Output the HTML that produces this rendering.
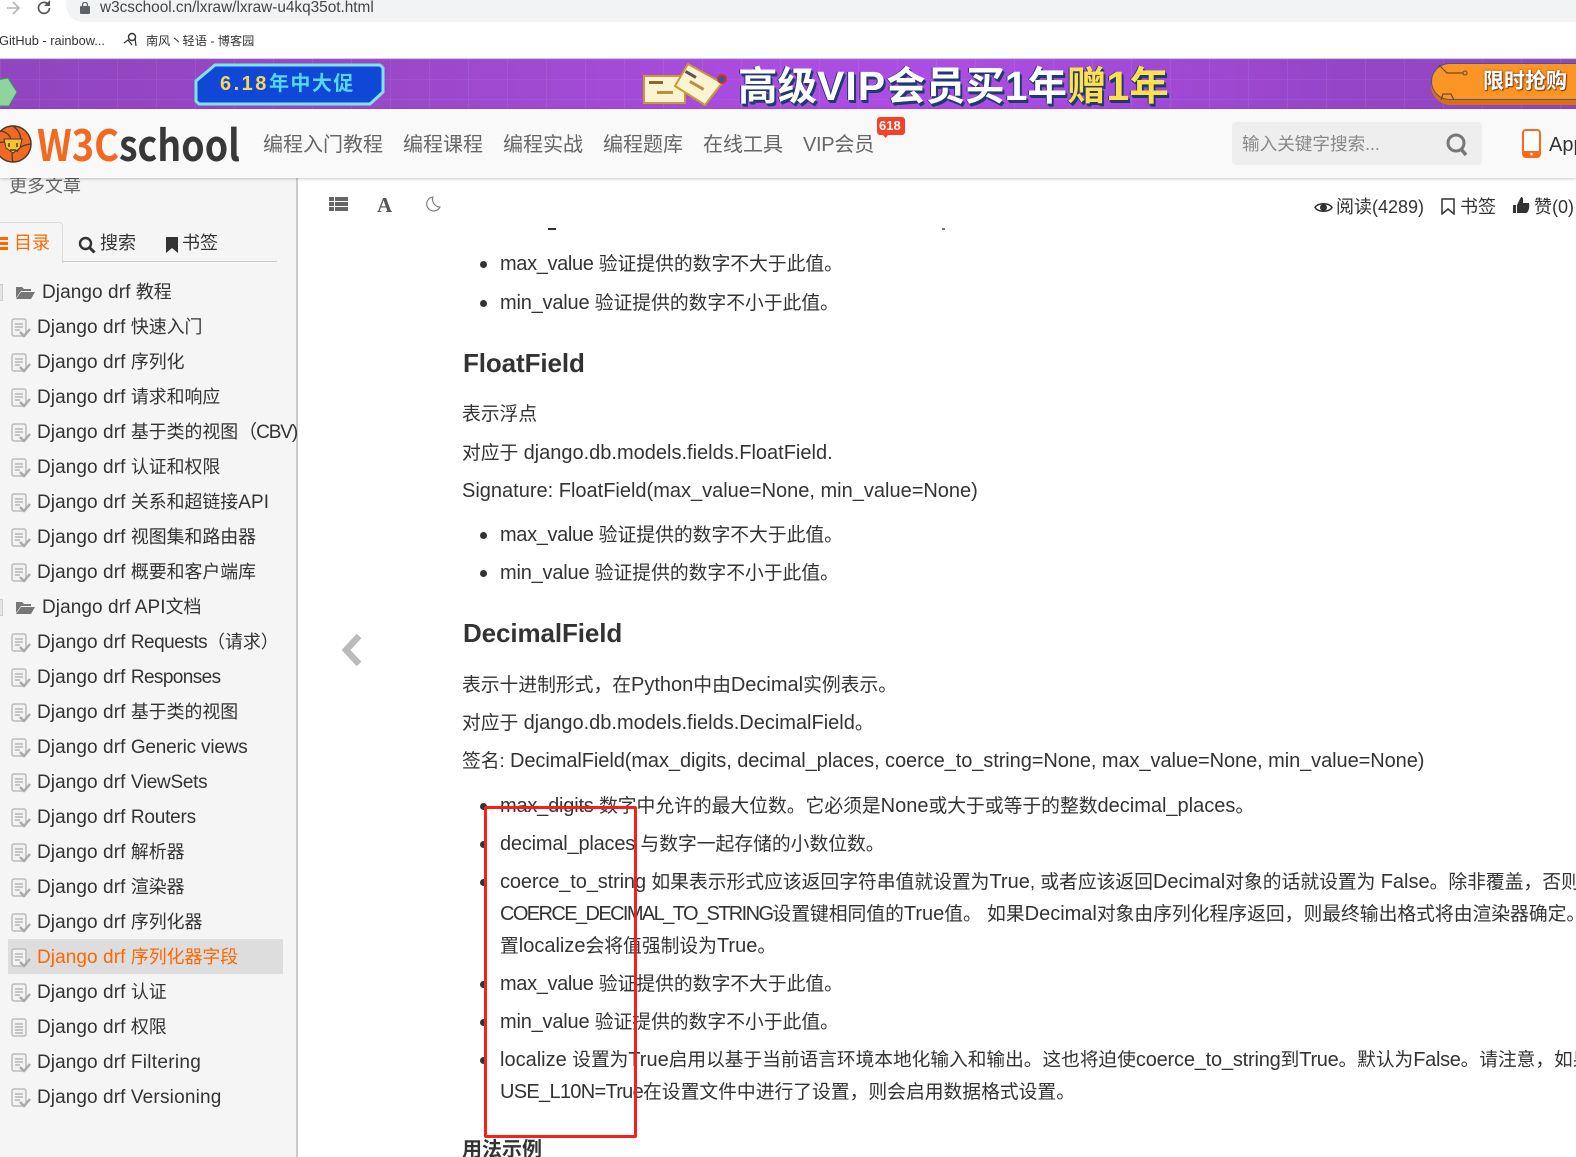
<!DOCTYPE html>
<html lang="zh"><head><meta charset="utf-8"><title>Django drf 序列化器字段</title>
<style>
html,body{margin:0;padding:0;background:#fff;overflow:hidden}
body{width:1576px;height:1157px;font-family:"Liberation Sans","Noto Sans CJK SC",sans-serif;color:#333}
#w{position:absolute;left:0;top:0;width:1576px;height:1157px;overflow:hidden}
div,span,svg{position:absolute}
em{position:static;font-style:normal}
.l{white-space:nowrap;line-height:30px;height:30px;font-size:18.8px;color:#333;position:absolute}
.l em{font-size:20px;letter-spacing:-.2px}
.l em.a{letter-spacing:-.35px}
.l em.b{letter-spacing:-.2px}
.l em.c{letter-spacing:-1.6px}
.l em.d{letter-spacing:-.7px}
.l em.t{letter-spacing:-.3px}
.l em.z{letter-spacing:0}
.h{font-weight:bold;font-size:26px;color:#333;letter-spacing:-.1px}
.s{font-size:17.9px;left:37px;color:#333;white-space:nowrap;position:absolute;line-height:30px}
.s em{font-size:19px;letter-spacing:.08px}
.n{font-size:20px;color:#666;top:130px;line-height:30px;white-space:nowrap}
.dot{width:7px;height:7px;border-radius:50%;background:#333;left:480px}
</style></head><body><div id="w">
<svg width="0" height="0" style="position:absolute"><defs>
<symbol id="doc" viewBox="0 0 20 20"><rect x="1" y="1" width="14" height="17" rx="2" fill="#f2f2f2" stroke="#bbb" stroke-width="1.5"/><path d="M4 6h8M4 9h8M4 12h5" stroke="#aaa" stroke-width="1.2" fill="none"/><path d="M9 14l4 4 6-7" stroke="#aaa" stroke-width="2.4" fill="none"/></symbol>
<symbol id="doc2" viewBox="0 0 20 20"><rect x="1" y="1" width="14" height="17" rx="2" fill="#f2f2f2" stroke="#bbb" stroke-width="1.5"/><path d="M4 6h8M4 9h8M4 12h8M4 15h8" stroke="#aaa" stroke-width="1.2" fill="none"/></symbol>
<symbol id="fold" viewBox="0 0 20 16"><path d="M1 14V3h6l2 2h7v2H6L1 14zM6 8h14l-4 7H1z" fill="#777"/></symbol>
</defs></svg>

<!-- browser chrome -->
<div style="left:66px;top:-12px;width:1510px;height:34px;background:#f1f3f4;border-radius:17px 0 0 17px"></div>
<svg style="left:4px;top:0" width="18" height="16" viewBox="0 0 18 16"><path d="M3 8h11M9 2l6 6-6 6" stroke="#b5b5b5" stroke-width="1.6" fill="none"/></svg>
<svg style="left:36px;top:0" width="16" height="16" viewBox="0 0 16 16"><path d="M13.500 8a5.500 5.500 0 1 1-1.600-4" stroke="#555" stroke-width="1.700" fill="none"/><path d="M14 0v6H8z" fill="#555"/></svg>
<svg style="left:80px;top:2px" width="10" height="12" viewBox="0 0 10 12"><rect x="0" y="4" width="10" height="8" rx="1" fill="#5f6368"/><path d="M2.500 5V2.800a2.500 2.500 0 0 1 5 0V5" stroke="#5f6368" stroke-width="1.300" fill="none"/></svg>
<div class="l" style="left:100px;top:-7px;font-size:15.35px;color:#444">w3cschool.cn/lxraw/lxraw-u4kq35ot.html</div>
<div class="l" style="left:-1px;top:26px;font-size:12.8px;color:#333">GitHub - rainbow...</div>
<svg style="left:123px;top:32px" width="15" height="16" viewBox="0 0 15 16"><path d="M1 11L5 8l4 5" stroke="#333" stroke-width="1.200" fill="none"/><circle cx="9" cy="5" r="3.500" stroke="#333" stroke-width="1.400" fill="none"/><path d="M12 6l1 8" stroke="#333" stroke-width="1.200"/></svg>
<div class="l" style="left:146px;top:26px;font-size:12.2px;color:#333">南风丶轻语 - 博客园</div>

<!-- banner -->
<div style="left:0;top:58px;width:1576px;height:51px;border-top:1px solid #ccc;box-sizing:border-box;background-color:#9a48c9;background-image:linear-gradient(90deg,#9145bf 0,#9a48c9 25%,#ab4ce2 50%,#ab4ce2 62%,#9546c8 85%,#9145bf 100%)"></div>
<div style="left:0;top:59px;width:1576px;height:50px;background-image:linear-gradient(90deg,rgba(255,255,255,.07) 1px,transparent 1px),linear-gradient(rgba(255,255,255,.05) 1px,transparent 1px);background-size:39px 20px"></div>
<svg style="left:0;top:76px" width="17" height="32" viewBox="0 0 17 32"><path d="M-4 4L8 2l9 14-8 14H-4z" fill="#8fd49d" stroke="#3f8f6a"/></svg>
<svg style="left:193px;top:63px" width="192" height="43" viewBox="0 0 192 43"><path d="M22 2H187l3 3v24l-13 12H6l-3-3V18z" fill="#1047d6" stroke="#7fe3ea" stroke-width="3"/></svg>
<div class="l" style="left:220px;top:69px;font-size:20px;font-weight:bold;letter-spacing:1.5px;color:#f5d757"><em style="letter-spacing:2.5px;font-size:20px">6.18</em><span style="position:static;color:#53d9ee">年中大促</span></div>
<svg style="left:643px;top:63px" width="86" height="44" viewBox="0 0 86 44"><rect x="1" y="13" width="41" height="27" fill="#fbf3d2" stroke="#c99a32" stroke-width="2"/><path d="M45 1L79 20 62 42 32 23z" fill="#fbf3d2" stroke="#c99a32" stroke-width="2"/><circle cx="79" cy="16" r="4" fill="#355a8a" stroke="#c33" stroke-width="2"/><rect x="6" y="18" width="14" height="3" fill="#8a6a2a"/><rect x="42" y="10" width="12" height="3" fill="#555" transform="rotate(30 48 11)"/><rect x="14" y="28" width="16" height="3" fill="#b89040"/><rect x="46" y="21" width="16" height="3" fill="#b89040" transform="rotate(30 54 22)"/></svg>
<div style="left:738px;top:62px;line-height:48px;height:48px;white-space:nowrap;font-size:39.500px;font-weight:bold;color:#fff;text-shadow:1px 2px 0 #1f3a6e,2px 3px 0 #1f3a6e,-1px 0 0 #1f3a6e">高级<em style="font-size:41px;letter-spacing:1px">VIP</em>会员买<em style="font-size:41px">1</em>年<span style="position:static;color:#ffe14d">赠<em style="font-size:41px">1</em>年</span></div>
<div style="left:1431px;top:66px;width:145px;height:39px;background:#d96f10;border-radius:20px 0 0 20px"></div>
<div style="left:1431px;top:63px;width:145px;height:37px;background:#fb9526;border-radius:19px 0 0 19px;border:1px solid #4a5a7a;border-right:0;box-sizing:border-box"></div>
<svg style="left:1435px;top:64px" width="40" height="36" viewBox="0 0 40 36"><path d="M4 1l8 8h16M6 36l2-6h8l3 6" stroke="#6b4a2a" stroke-width="1.200" fill="none"/><circle cx="30" cy="9" r="2" fill="none" stroke="#6b4a2a"/></svg>
<div class="l" style="left:1483px;top:67px;font-size:21px;font-weight:bold;color:#fff;text-shadow:0 0 2px #7a3a10,1px 1px 1px #7a3a10">限时抢购</div>

<!-- sidebar -->
<div style="left:0;top:178px;width:296px;height:979px;background:#f5f5f5;border-right:2px solid #ccc;box-sizing:content-box"></div>
<div class="l" style="left:9px;top:171px;font-size:18px;color:#666">更多文章</div>

<!-- header -->
<div style="left:0;top:109px;width:1576px;height:69px;background:#f9f9f9;box-shadow:0 1px 3px rgba(0,0,0,.22)"></div>
<svg style="left:0;top:122px" width="33" height="44" viewBox="5 0 33 44"><circle cx="18" cy="22" r="18" fill="#f26a21" stroke="#4a3a30" stroke-width="1.500"/><path d="M18 4C26 10 27 16 24 22M36 22c-8 1-12 3-14 8M18 40c-2-7-1-12 3-16M0 22c7-3 12-2 15 1M6 9c5 1 9 4 10 9" stroke="#4a3a30" stroke-width="1.300" fill="none"/><path d="M9 17h18l-2 9-7 5-7-5z" fill="#f5c32c" stroke="#4a3a30"/><path d="M14 21v4M22 21v4M15 28h6" stroke="#4a3a30" stroke-width="1.500"/></svg>
<svg style="left:36px;top:120px;overflow:visible" width="206" height="50"><text x="1" y="41" font-family="Noto Sans CJK SC,Liberation Sans,sans-serif" font-weight="bold" font-size="43" fill="#f26a21" textLength="82" lengthAdjust="spacingAndGlyphs">W3C</text><text x="83" y="41" font-family="Noto Sans CJK SC,Liberation Sans,sans-serif" font-weight="bold" font-size="43" fill="#383838" textLength="121" lengthAdjust="spacingAndGlyphs">school</text></svg>
<div class="n" style="left:263px">编程入门教程</div>
<div class="n" style="left:403px">编程课程</div>
<div class="n" style="left:503px">编程实战</div>
<div class="n" style="left:603px">编程题库</div>
<div class="n" style="left:703px">在线工具</div>
<div class="n" style="left:803px"><em style="letter-spacing:-.3px">VIP</em>会员</div>
<svg style="left:876px;top:116px" width="30" height="22" viewBox="0 0 30 22"><path d="M4 1h22a3 3 0 0 1 3 3v12a3 3 0 0 1-3 3H12l-2.500 3L7 19H4a3 3 0 0 1-3-3V4a3 3 0 0 1 3-3z" fill="#f5402a"/></svg>
<div class="l" style="left:879px;top:111px;font-size:13px;font-weight:bold;color:#fff">618</div>
<div style="left:1232px;top:122px;width:250px;height:43px;background:#eee;border-radius:4px"></div>
<div class="l" style="left:1242px;top:129px;font-size:17.600px;color:#888">输入关键字搜索...</div>
<svg style="left:1445px;top:132px" width="24" height="25" viewBox="0 0 24 25"><circle cx="11" cy="11" r="8" stroke="#777" stroke-width="3" fill="none"/><path d="M16 17l5 6" stroke="#777" stroke-width="3.500"/></svg>
<svg style="left:1522px;top:129px" width="19" height="29" viewBox="0 0 19 29"><rect x="1" y="1" width="17" height="27" rx="3" fill="#fff" stroke="#fb6a1c" stroke-width="2"/><rect x="1" y="22" width="17" height="6" fill="#fb6a1c"/><circle cx="9.500" cy="25" r="1.300" fill="#fff"/></svg>
<div class="l" style="left:1549px;top:130px;color:#333"><em class="z">App</em></div>

<!-- sidebar tabs -->
<div style="left:-4px;top:222px;width:65px;height:40px;border:1px solid #ddd;border-bottom:0;border-radius:4px 4px 0 0;background:#f5f5f5;box-sizing:content-box"></div>
<div style="left:62px;top:261px;width:215px;height:1px;background:#ccc"></div>
<div style="left:0;top:237px;width:8px;height:3px;background:#f60;box-shadow:0 5px 0 #f60,0 10px 0 #f60"></div>
<div class="l" style="left:14px;top:228px;font-size:18px;color:#f60">目录</div>
<svg style="left:78px;top:236px" width="18" height="18" viewBox="0 0 18 18"><circle cx="7.500" cy="7.500" r="5.500" stroke="#333" stroke-width="2.400" fill="none"/><path d="M11.500 11.500l5 5" stroke="#333" stroke-width="3"/></svg>
<div class="l" style="left:100px;top:228px;font-size:18px">搜索</div>
<svg style="left:165px;top:237px" width="14" height="16" viewBox="0 0 14 16"><path d="M1 0h12v16l-6-5-6 5z" fill="#333"/></svg>
<div class="l" style="left:182px;top:228px;font-size:18px">书签</div>
<div style="left:-6px;top:284px;width:7px;height:15px;background:#e5e5e5;border:1px solid #ccc"></div>

<!-- highlighted row -->
<div style="left:8px;top:939px;width:275px;height:35px;background:#ddd"></div>

<svg style="left:15px;top:284px" width="20" height="16"><use href="#fold"/></svg><div class="s" style="left:42px;top:277px"><em>Django drf </em>教程</div>
<svg style="left:11px;top:318px" width="20" height="20"><use href="#doc"/></svg><div class="s" style="top:312px"><em>Django drf </em>快速入门</div>
<svg style="left:11px;top:353px" width="20" height="20"><use href="#doc"/></svg><div class="s" style="top:347px"><em>Django drf </em>序列化</div>
<svg style="left:11px;top:388px" width="20" height="20"><use href="#doc"/></svg><div class="s" style="top:382px"><em>Django drf </em>请求和响应</div>
<svg style="left:11px;top:423px" width="20" height="20"><use href="#doc"/></svg><div class="s" style="top:417px"><em>Django drf </em>基于类的视图<em style="letter-spacing:-1.1px">（CBV)</em></div>
<svg style="left:11px;top:458px" width="20" height="20"><use href="#doc"/></svg><div class="s" style="top:452px"><em>Django drf </em>认证和权限</div>
<svg style="left:11px;top:493px" width="20" height="20"><use href="#doc"/></svg><div class="s" style="top:487px"><em>Django drf </em>关系和超链接<em>API</em></div>
<svg style="left:11px;top:528px" width="20" height="20"><use href="#doc"/></svg><div class="s" style="top:522px"><em>Django drf </em>视图集和路由器</div>
<svg style="left:11px;top:563px" width="20" height="20"><use href="#doc"/></svg><div class="s" style="top:557px"><em>Django drf </em>概要和客户端库</div>
<svg style="left:15px;top:599px" width="20" height="16"><use href="#fold"/></svg><div class="s" style="left:42px;top:592px"><em>Django drf API</em>文档</div>
<div style="left:-6px;top:599px;width:7px;height:15px;background:#e5e5e5;border:1px solid #ccc"></div>
<svg style="left:11px;top:633px" width="20" height="20"><use href="#doc"/></svg><div class="s" style="top:627px"><em>Django drf </em><em style="letter-spacing:-.5px">Requests</em>（请求）</div>
<svg style="left:11px;top:668px" width="20" height="20"><use href="#doc"/></svg><div class="s" style="top:662px"><em>Django drf </em><em style="letter-spacing:-.6px">Responses</em></div>
<svg style="left:11px;top:703px" width="20" height="20"><use href="#doc"/></svg><div class="s" style="top:697px"><em>Django drf </em>基于类的视图</div>
<svg style="left:11px;top:738px" width="20" height="20"><use href="#doc"/></svg><div class="s" style="top:732px"><em>Django drf </em><em style="letter-spacing:-.2px">Generic views</em></div>
<svg style="left:11px;top:773px" width="20" height="20"><use href="#doc"/></svg><div class="s" style="top:767px"><em>Django drf </em><em style="letter-spacing:-.3px">ViewSets</em></div>
<svg style="left:11px;top:808px" width="20" height="20"><use href="#doc"/></svg><div class="s" style="top:802px"><em>Django drf </em><em style="letter-spacing:-.2px">Routers</em></div>
<svg style="left:11px;top:843px" width="20" height="20"><use href="#doc"/></svg><div class="s" style="top:837px"><em>Django drf </em>解析器</div>
<svg style="left:11px;top:878px" width="20" height="20"><use href="#doc"/></svg><div class="s" style="top:872px"><em>Django drf </em>渲染器</div>
<svg style="left:11px;top:913px" width="20" height="20"><use href="#doc"/></svg><div class="s" style="top:907px"><em>Django drf </em>序列化器</div>
<svg style="left:11px;top:948px" width="20" height="20"><use href="#doc"/></svg><div class="s" style="top:942px;color:#f60"><em>Django drf </em>序列化器字段</div>
<svg style="left:11px;top:983px" width="20" height="20"><use href="#doc"/></svg><div class="s" style="top:977px"><em>Django drf </em>认证</div>
<svg style="left:11px;top:1018px" width="20" height="20"><use href="#doc2"/></svg><div class="s" style="top:1012px"><em>Django drf </em>权限</div>
<svg style="left:11px;top:1053px" width="20" height="20"><use href="#doc"/></svg><div class="s" style="top:1047px"><em>Django drf </em><em style="letter-spacing:.3px">Filtering</em></div>
<svg style="left:11px;top:1088px" width="20" height="20"><use href="#doc"/></svg><div class="s" style="top:1082px"><em>Django drf </em><em style="letter-spacing:.2px">Versioning</em></div>

<!-- toolbar -->
<svg style="left:329px;top:197px" width="19" height="14" viewBox="0 0 19 14"><path d="M0 0h5v4H0zM6 0h13v4H6zM0 5h5v4H0zM6 5h13v4H6zM0 10h5v4H0zM6 10h13v4H6z" fill="#666"/></svg>
<div class="l" style="left:377px;top:190px;font-family:'Liberation Serif',serif;font-weight:bold;font-size:21px;color:#555">A</div>
<svg style="left:425px;top:196px" width="16" height="16" viewBox="0 0 16 16"><path d="M8 1a7 7 0 1 0 7 10A7.500 7.500 0 0 1 8 1z" fill="none" stroke="#777" stroke-width="1.100"/></svg>
<svg style="left:1314px;top:201px" width="19" height="13" viewBox="0 0 19 13"><path d="M1 6.500C4 1.500 15 1.500 18 6.500 15 11.500 4 11.500 1 6.500z" fill="none" stroke="#333" stroke-width="1.600"/><circle cx="9.500" cy="6.500" r="3.500" fill="#333"/></svg>
<div class="l" style="left:1336px;top:192px;font-size:18px">阅读<em style="font-size:18px;letter-spacing:0">(4289)</em></div>
<svg style="left:1441px;top:198px" width="14" height="17" viewBox="0 0 14 17"><path d="M1 1h12v15l-6-5-6 5z" fill="none" stroke="#333" stroke-width="1.500"/></svg>
<div class="l" style="left:1460px;top:192px;font-size:18px">书签</div>
<svg style="left:1513px;top:197px" width="17" height="17" viewBox="0 0 17 17"><path d="M0 8h3v8H0zM4 8l4-8c2 0 2.500 2 2 6h6c1 5-1 10-3 10H4z" fill="#333"/></svg>
<div class="l" style="left:1534px;top:192px;font-size:18px">赞<em style="font-size:18px;letter-spacing:0">(0)</em></div>
<svg style="left:340px;top:633px" width="24" height="34" viewBox="0 0 24 34"><path d="M19 3L6 17l13 14" stroke="#bbb" stroke-width="6.500" fill="none"/></svg>
<div style="left:548px;top:228px;width:8px;height:2px;background:#333"></div>
<div style="left:942px;top:228px;width:3px;height:2px;background:#777"></div>

<!-- content -->
<div class="dot" style="top:261px"></div><div class="l" style="left:500px;top:249px"><em class="a">max_value </em>验证提供的数字不大于此值。</div>
<div class="dot" style="top:300px"></div><div class="l" style="left:500px;top:288px"><em class="b">min_value </em>验证提供的数字不小于此值。</div>
<div class="l h" style="left:463px;top:348px">FloatField</div>
<div class="l" style="left:462px;top:399px">表示浮点</div>
<div class="l" style="left:462px;top:438px">对应于 <em class="z">django.db.models.fields.FloatField.</em></div>
<div class="l" style="left:462px;top:476px"><em class="z">Signature: FloatField(max_value=None, min_value=None)</em></div>
<div class="dot" style="top:532px"></div><div class="l" style="left:500px;top:520px"><em class="a">max_value </em>验证提供的数字不大于此值。</div>
<div class="dot" style="top:570px"></div><div class="l" style="left:500px;top:558px"><em class="b">min_value </em>验证提供的数字不小于此值。</div>
<div class="l h" style="left:463px;top:618px">DecimalField</div>
<div class="l" style="left:462px;top:670px">表示十进制形式，在<em class="z">Python</em>中由<em class="z">Decimal</em>实例表示。</div>
<div class="l" style="left:462px;top:708px">对应于 <em class="z">django.db.models.fields.DecimalField</em>。</div>
<div class="l" style="left:462px;top:746px">签名: <em style="letter-spacing:-.07px">DecimalField(max_digits, decimal_places, coerce_to_string=None, max_value=None, min_value=None)</em></div>
<div class="dot" style="top:803px"></div><div class="l" style="left:500px;top:791px"><em class="b">max_digits </em>数字中允许的最大位数。它必须是<em class="z">None</em>或大于或等于的整数<em class="z">decimal_places</em>。</div>
<div class="dot" style="top:841px"></div><div class="l" style="left:500px;top:829px"><em class="b">decimal_places </em>与数字一起存储的小数位数。</div>
<div class="dot" style="top:879px"></div><div class="l" style="left:500px;top:867px"><em style="letter-spacing:-.12px">coerce_to_string </em>如果表示形式应该返回字符串值就设置为<em class="z">True</em>, 或者应该返回<em class="z">Decimal</em>对象的话就设置为 <em class="z">False</em>。除非覆盖，否则默认</div>
<div class="l" style="left:500px;top:899px"><em class="c">COERCE_DECIMAL_TO_STRING</em>设置键相同值的<em class="z">True</em>值。 如果<em class="z">Decimal</em>对象由序列化程序返回，则最终输出格式将由渲染器确定。请</div>
<div class="l" style="left:500px;top:931px">置<em class="z">localize</em>会将值强制设为<em class="z">True</em>。</div>
<div class="dot" style="top:981px"></div><div class="l" style="left:500px;top:969px"><em class="a">max_value </em>验证提供的数字不大于此值。</div>
<div class="dot" style="top:1019px"></div><div class="l" style="left:500px;top:1007px"><em class="b">min_value </em>验证提供的数字不小于此值。</div>
<div class="dot" style="top:1057px"></div><div class="l" style="left:500px;top:1045px;font-size:18.7px"><em class="z">localize </em>设置为<em class="z">True</em>启用以基于当前语言环境本地化输入和输出。这也将迫使<em class="b">coerce_to_string</em>到<em class="t">True</em>。默认为<em class="t">False</em>。请注意，如果</div>
<div class="l" style="left:500px;top:1077px"><em class="d">USE_L10N=True</em>在设置文件中进行了设置，则会启用数据格式设置。</div>
<div class="l" style="left:462px;top:1135px;font-weight:bold;font-size:20px">用法示例</div>

<!-- red annotation -->
<div style="left:484px;top:806px;width:153px;height:332px;box-sizing:border-box;border:3px solid #f5201a;border-radius:2px"></div>
</div></body></html>
